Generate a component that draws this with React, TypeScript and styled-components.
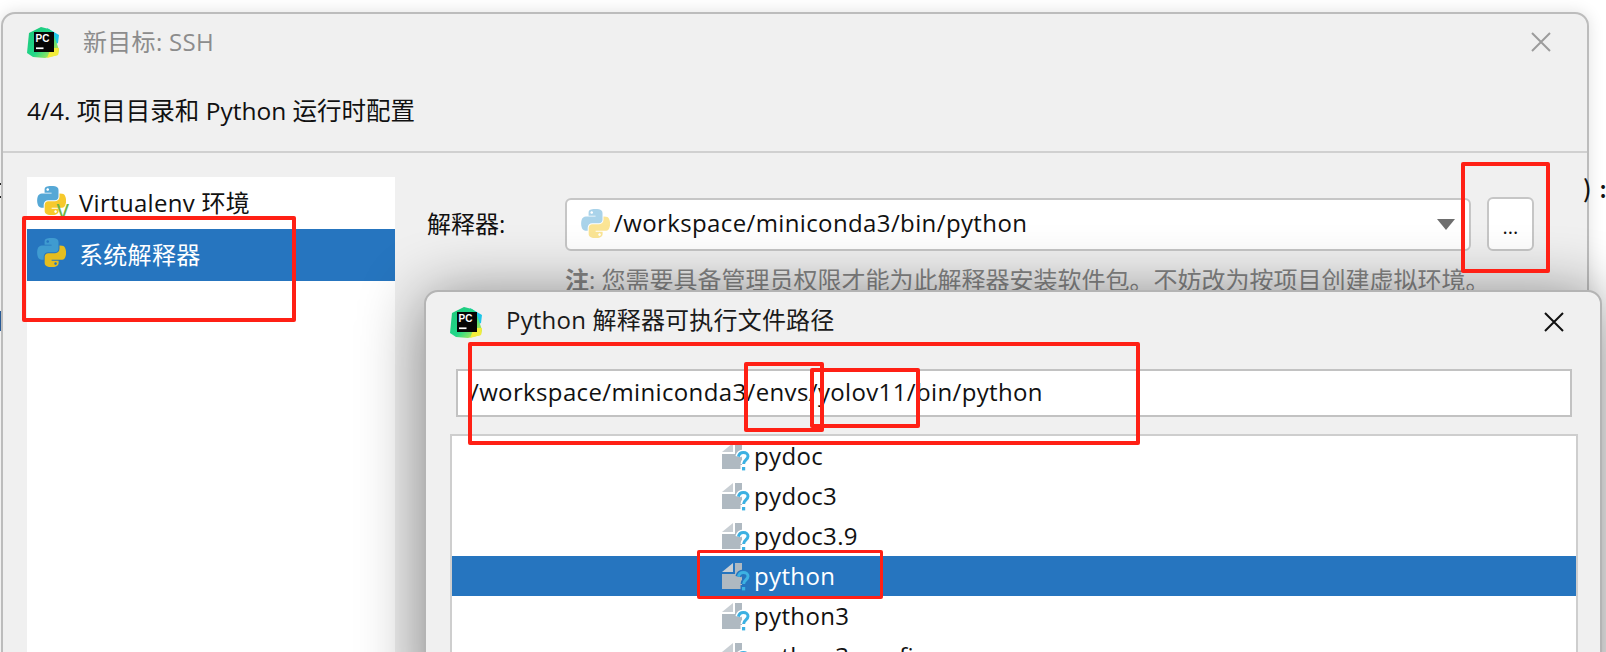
import styled, { createGlobalStyle } from "styled-components";

const GlobalStyle = createGlobalStyle`
  html, body {
    margin: 0;
    padding: 0;
    background: #ffffff;
  }
  * {
    box-sizing: border-box;
  }
`;

const FONT = `"Open Sans", "Noto Sans CJK SC", sans-serif`;

const Page = styled.div`
  position: relative;
  width: 1606px;
  height: 652px;
  overflow: hidden;
  background: #ffffff;
  padding: 12px 17px 0 1px;
  font-family: ${FONT};
  font-size: 24px;
  color: #111111;
`;

const Dialog = styled.div`
  position: relative;
  height: 700px;
  background: #f0f0f0;
  border: 2px solid #bcbcbc;
  border-radius: 14px 14px 0 0;
  box-shadow: 0 0 16px rgba(0, 0, 0, 0.12);
`;

const TitleBar = styled.div`
  display: flex;
  align-items: center;
  height: 56px;
  padding: 0 36px 0 24px;
`;

const TitleText = styled.div`
  margin-left: 23px;
  flex: 1;
  line-height: 32px;
  color: #8c8c8c;
  letter-spacing: 0.3px;
`;

const CloseButton = styled.svg<{ $color: string }>`
  width: 20px;
  height: 20px;
  stroke: ${(p) => p.$color};
  stroke-width: 2;
  fill: none;
`;

const StepHeader = styled.div`
  height: 83px;
  padding: 11px 0 0 24px;
  line-height: 60px;
  font-size: 24.5px;
  border-bottom: 2px solid #d0d0d0;
`;

const Body = styled.div`
  display: flex;
  padding: 24px 0 0 24px;
`;

const Sidebar = styled.div`
  width: 368px;
  height: 480px;
  background: #ffffff;
  flex-shrink: 0;
`;

const SidebarItem = styled.div<{ $selected?: boolean }>`
  display: flex;
  align-items: center;
  gap: 10px;
  height: 52px;
  padding: 0 0 4px 10px;
  letter-spacing: 0.3px;
  background: ${(p) => (p.$selected ? "#2675bf" : "transparent")};
  color: ${(p) => (p.$selected ? "#ffffff" : "#111111")};
`;

const IconSlot = styled.div`
  position: relative;
  width: 32px;
  height: 30px;
  flex-shrink: 0;
`;

const VBadge = styled.span`
  position: absolute;
  right: 0;
  bottom: -2px;
  font-size: 25px;
  line-height: 20px;
  font-weight: 400;
  letter-spacing: 0;
  color: #6fb43f;
`;

const SettingsPane = styled.div`
  flex: 1;
  padding: 20px 0 0 32px;
`;

const FieldRow = styled.div`
  display: flex;
  align-items: center;
  height: 54px;
`;

const FieldLabel = styled.div`
  width: 138px;
  flex-shrink: 0;
  padding-bottom: 4px;
`;

const ComboBox = styled.div`
  display: flex;
  align-items: center;
  gap: 4px;
  width: 906px;
  height: 53px;
  padding: 0 14px;
  background: #ffffff;
  border: 2px solid #c6c6c6;
  border-radius: 6px;
`;

const ComboIcon = styled.div`
  display: flex;
  padding-bottom: 2px;
`;

const ComboValue = styled.div`
  flex: 1;
  padding-bottom: 4px;
  letter-spacing: 0.38px;
`;

const ComboArrow = styled.div`
  width: 0;
  height: 0;
  border-left: 9px solid transparent;
  border-right: 9px solid transparent;
  border-top: 11px solid #6e6e6e;
`;

const BrowseButton = styled.div`
  display: flex;
  align-items: center;
  justify-content: center;
  width: 47px;
  height: 54px;
  margin-left: 16px;
  background: #ffffff;
  border: 2px solid #c6c6c6;
  border-radius: 6px;
  font-size: 20px;
  line-height: 20px;
  padding-top: 6px;
`;

const Note = styled.div`
  margin: 13px 0 0 138px;
  white-space: nowrap;
  line-height: 32px;
  color: #858585;

  b {
    font-weight: 700;
  }
`;

const PathDialog = styled.div`
  position: absolute;
  left: 424px;
  top: 290px;
  width: 1178px;
  height: 420px;
  background: #f0f0f0;
  border: 2px solid #b4b4b4;
  border-radius: 14px 14px 0 0;
  box-shadow: 0 6px 64px rgba(0, 0, 0, 0.48);
  padding: 0 26px 0 24px;
`;

const PathTitleBar = styled.div`
  display: flex;
  align-items: center;
  height: 60px;
  padding-right: 10px;
`;

const PathTitle = styled.div`
  flex: 1;
  margin-left: 23px;
  padding-bottom: 8px;
  letter-spacing: 0.2px;
  color: #1a1a1a;
`;

const PathInput = styled.div`
  display: flex;
  align-items: center;
  height: 48px;
  margin: 17px 2px 0 6px;
  width: 1116px;
  padding: 0 0 4px 12px;
  letter-spacing: 0.36px;
  background: #ffffff;
  border: 2px solid #c2c2c2;
`;

const FileList = styled.div`
  width: 1128px;
  height: 300px;
  margin-top: 17px;
  background: #ffffff;
  border: 2px solid #cecece;
`;

const FileRow = styled.div<{ $selected?: boolean }>`
  display: flex;
  align-items: center;
  gap: 4px;
  height: 40px;
  padding-left: 270px;
  letter-spacing: 0.35px;
  background: ${(p) => (p.$selected ? "#2675bf" : "transparent")};
  color: ${(p) => (p.$selected ? "#ffffff" : "#111111")};

  span {
    padding-bottom: 2px;
  }
`;

const Annotation = styled.div<{ $x: number; $y: number; $w: number; $h: number; $t?: number }>`
  position: absolute;
  left: ${(p) => p.$x}px;
  top: ${(p) => p.$y}px;
  width: ${(p) => p.$w}px;
  height: ${(p) => p.$h}px;
  border: ${(p) => p.$t ?? 4}px solid #ff2015;
  border-radius: 2px;
`;

const BehindText = styled.div`
  position: absolute;
  left: 1583px;
  top: 172px;
  font-family: "Noto Sans CJK SC", sans-serif;
  font-size: 24px;
  line-height: 32px;
  font-weight: 500;
  letter-spacing: 8px;
  white-space: nowrap;
  color: #111111;
`;

const EdgeMark = styled.div<{ $y: number; $color?: string; $h?: number }>`
  position: absolute;
  left: 0;
  top: ${(p) => p.$y}px;
  width: 2px;
  height: ${(p) => p.$h ?? 2}px;
  background: ${(p) => p.$color ?? "#222222"};
`;

const PYTHON_BLUE =
  "M54.9 0C50.3 0 46 .4 42.1 1.1 30.8 3.1 28.8 7.3 28.8 15v10.2h26.5v3.4H18.8c-7.7 0-14.4 4.6-16.5 13.4-2.4 10-2.5 16.3 0 26.7 1.9 7.8 6.3 13.4 14 13.4h9.1V70.8c0-8.7 7.5-16.3 16.5-16.3h26.5c7.4 0 13.2-6 13.2-13.4V15c0-7.1-6-12.4-13.2-13.6C63.7.3 59 0 54.9 0zM40.6 8.2c2.7 0 5 2.3 5 5 0 2.7-2.2 4.9-5 4.9-2.7 0-5-2.2-5-4.9 0-2.8 2.2-5 5-5z";
const PYTHON_YELLOW =
  "M85.3 28.6v11.9c0 9.2-7.8 17-16.5 17H42.3c-7.2 0-13.2 6.2-13.2 13.4V96c0 7.1 6.2 11.3 13.2 13.4 8.3 2.4 16.3 2.9 26.5 0 6.6-1.9 13.2-5.8 13.2-13.4V85.9H55.5v-3.4h39.7c7.7 0 10.6-5.4 13.2-13.4 2.8-8.3 2.7-16.2 0-26.7-1.9-7.6-5.5-13.4-13.2-13.4zM70.4 92.2c2.7 0 5 2.2 5 4.9 0 2.8-2.2 5-5 5-2.7 0-5-2.3-5-5 0-2.7 2.2-4.9 5-4.9z";

const PythonIcon = (props: { blue: string; yellow: string; size?: number }) => {
  const size = props.size ?? 29;
  return (
    <svg width={size} height={size} viewBox="0 0 110 110">
      <path d={PYTHON_BLUE} fill={props.blue} fillRule="evenodd" />
      <path d={PYTHON_YELLOW} fill={props.yellow} fillRule="evenodd" />
    </svg>
  );
};

const PyCharmIcon = (props: { id: string }) => {
  return (
    <svg width="33" height="33" viewBox="0 0 33 33">
      <defs>
        <linearGradient id={props.id} x1="0" y1="0" x2="1" y2="1">
          <stop offset="0" stopColor="#1dc67a" />
          <stop offset="0.55" stopColor="#21d789" />
          <stop offset="1" stopColor="#f4ee3f" />
        </linearGradient>
      </defs>
      <polygon points="20,2 32,9 31,17 25,20 22,10" fill="#1dc6e8" />
      <polygon points="2,7 14,1 22,3 26,6 32,24 31,29 18,32 6,31 0,27" fill={`url(#${props.id})`} />
      <polygon points="24,22 32,22 31,29 20,32" fill="#f2ec3c" />
      <rect x="7" y="6" width="20" height="20" fill="#050505" />
      <text x="8.6" y="15.6" fontFamily="Liberation Sans, sans-serif" fontWeight="700" fontSize="10" fill="#ffffff">
        PC
      </text>
      <rect x="9" y="21.4" width="7.5" height="1.7" fill="#ffffff" />
    </svg>
  );
};

const CloseIcon = (props: { color: string }) => {
  return (
    <CloseButton $color={props.color} viewBox="0 0 20 20">
      <path d="M1 1L19 19M19 1L1 19" />
    </CloseButton>
  );
};

const QUESTION_HOOK = "M16.4 15.6c.6-2.8 2.6-4.2 5-4.2 2.8 0 4.6 1.7 4.6 3.9 0 3.4-4.4 3.7-4.4 7.6";

const UnknownFileIcon = (props: { halo: string }) => {
  return (
    <svg width="28" height="30" viewBox="0 0 28 30">
      <polygon points="0,11 11,2 11,11" fill="#c9cfd4" />
      <polygon points="13,2 20,2 20,28 0,28 0,13 13,13" fill="#afb9c1" />
      <path d={QUESTION_HOOK} fill="none" stroke={props.halo} strokeWidth="6" />
      <rect x="18.5" y="24" width="6" height="6" fill={props.halo} />
      <path d={QUESTION_HOOK} fill="none" stroke="#3db1e2" strokeWidth="3" />
      <rect x="20" y="26" width="3.2" height="3.4" fill="#3db1e2" />
    </svg>
  );
};

const files = ["pydoc", "pydoc3", "pydoc3.9", "python", "python3", "python3-config"];

const App = () => {
  return (
    <Page>
      <GlobalStyle />
      <EdgeMark $y={183} />
      <EdgeMark $y={196} />
      <EdgeMark $y={311} $color="#2a5f9e" $h={20} />

      <Dialog>
        <TitleBar>
          <PyCharmIcon id="pc-outer" />
          <TitleText>新目标: SSH</TitleText>
          <CloseIcon color="#9c9c9c" />
        </TitleBar>
        <StepHeader>4/4. 项目目录和 Python 运行时配置</StepHeader>
        <Body>
          <Sidebar>
            <SidebarItem>
              <IconSlot>
                <PythonIcon blue="#56a8d6" yellow="#f6c92c" />
                <VBadge>v</VBadge>
              </IconSlot>
              <span>Virtualenv 环境</span>
            </SidebarItem>
            <SidebarItem $selected>
              <IconSlot>
                <PythonIcon blue="#3f9bd0" yellow="#e6bd1e" />
              </IconSlot>
              <span>系统解释器</span>
            </SidebarItem>
          </Sidebar>
          <SettingsPane>
            <FieldRow>
              <FieldLabel>解释器:</FieldLabel>
              <ComboBox>
                <ComboIcon>
                  <PythonIcon blue="#a9d3ea" yellow="#fbe595" />
                </ComboIcon>
                <ComboValue>/workspace/miniconda3/bin/python</ComboValue>
                <ComboArrow />
              </ComboBox>
              <BrowseButton>...</BrowseButton>
            </FieldRow>
            <Note>
              <b>注</b>: 您需要具备管理员权限才能为此解释器安装软件包。不妨改为按项目创建虚拟环境。
            </Note>
          </SettingsPane>
        </Body>
      </Dialog>
      <BehindText>):</BehindText>

      <PathDialog>
        <PathTitleBar>
          <PyCharmIcon id="pc-inner" />
          <PathTitle>Python 解释器可执行文件路径</PathTitle>
          <CloseIcon color="#111111" />
        </PathTitleBar>
        <PathInput>/workspace/miniconda3/envs/yolov11/bin/python</PathInput>
        <FileList>
          {files.map((name) => (
            <FileRow key={name} $selected={name === "python"}>
              <UnknownFileIcon halo={name === "python" ? "#2675bf" : "#ffffff"} />
              <span>{name}</span>
            </FileRow>
          ))}
        </FileList>
      </PathDialog>

      <Annotation $x={22} $y={216} $w={274} $h={106} />
      <Annotation $x={1461} $y={162} $w={89} $h={111} />
      <Annotation $x={468} $y={342} $w={672} $h={103} />
      <Annotation $x={744} $y={362} $w={80} $h={70} />
      <Annotation $x={810} $y={368} $w={110} $h={60} />
      <Annotation $x={697} $y={550} $w={186} $h={49} $t={3} />
    </Page>
  );
};

export default App;
